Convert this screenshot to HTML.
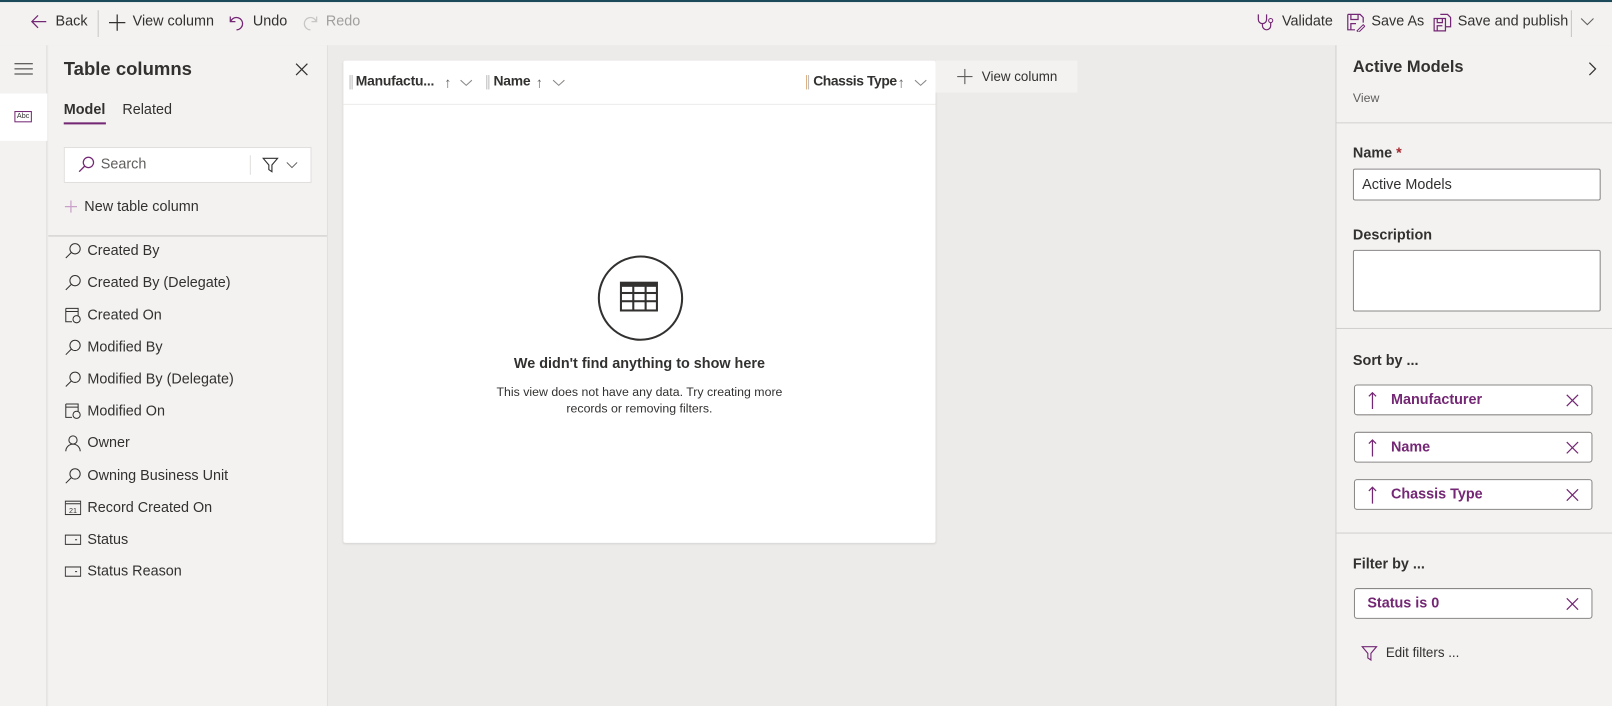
<!DOCTYPE html>
<html><head><style>
*{box-sizing:border-box;margin:0;padding:0}
html,body{width:1612px;height:706px;overflow:hidden;background:#edebe9}
#w{width:1568px;height:687px;position:relative;transform:scale(1.02806);transform-origin:0 0;font-family:"Segoe UI","Liberation Sans",sans-serif;font-size:14px;color:#323130}
.a{position:absolute}
.top{left:0;top:0;width:1568px;height:44px;background:#f3f2f1;border-top:2px solid #1c4a5a}
.tb{position:absolute;top:12px;font-size:14px;color:#323130;white-space:nowrap}
svg{display:block}
.li{position:absolute;left:63px;font-size:14px;color:#323130}
.li svg{position:absolute;left:0;top:1px}
.li span{position:absolute;left:22px;top:0;white-space:nowrap}
.chip{position:absolute;left:1317px;width:232px;height:30px;background:#fff;border:1px solid #8a8886;border-radius:3px;color:#742774;font-weight:600;font-size:14px}
.chip .t{position:absolute;left:35px;top:5px}
.chip .x{position:absolute;right:12px;top:8px}
.chip .u{position:absolute;left:13px;top:6px}
</style></head><body><div id="w">
<div class="a top"></div>
<div class="tb" style="left:30px;top:14px"><svg width="16" height="14" viewBox="0 0 16 14"><path d="M15 7H1M7 1L1 7l6 6" stroke="#742774" fill="none" stroke-width="1.2"/></svg></div>
<div class="tb" style="left:54px">Back</div>
<div class="a" style="left:95px;top:10px;width:1px;height:26px;background:#c8c6c4"></div>
<div class="tb" style="left:106px;top:14px"><svg width="16" height="16"><path d="M8 0v16M0 8h16" stroke="#323130" stroke-width="1.2"/></svg></div>
<div class="tb" style="left:129px">View column</div>
<div class="tb" style="left:222px;top:14px"><svg width="16" height="16"><path d="M2 2v5h5M2.5 6.5A6 6 0 1 1 8 15" stroke="#742774" fill="none" stroke-width="1.2"/></svg></div>
<div class="tb" style="left:246px">Undo</div>
<div class="tb" style="left:294px;top:14px"><svg width="16" height="16"><path d="M14 2v5H9M13.5 6.5A6 6 0 1 0 8 15" stroke="#c8c6c4" fill="none" stroke-width="1.2"/></svg></div>
<div class="tb" style="left:317px;color:#a19f9d">Redo</div>
<div class="tb" style="left:1222px;top:13px"><svg width="18" height="18"><path d="M2 1v5a4 4 0 0 0 8 0V1M6 10v2a4 4 0 0 0 8 0V9" stroke="#742774" fill="none" stroke-width="1.2"/><circle cx="14" cy="7" r="2" stroke="#742774" fill="none"/></svg></div>
<div class="tb" style="left:1247px">Validate</div>
<div class="tb" style="left:1310px;top:13px"><svg width="18" height="18"><path d="M1 1h12l3 3v5M1 1v15h7M4 1v5h7V1M4 16v-6h5" stroke="#742774" fill="none" stroke-width="1.2"/><path d="M10 17l6-6 1.5 1.5-6 6z" stroke="#742774" fill="none"/></svg></div>
<div class="tb" style="left:1334px">Save As</div>
<div class="tb" style="left:1394px;top:13px"><svg width="18" height="18"><path d="M1 5h11v12H1zM4 5v4h5V5M4 17v-5h5M7 1h7l3 3v9h-5" stroke="#742774" fill="none" stroke-width="1.2"/></svg></div>
<div class="tb" style="left:1418px">Save and publish</div>
<div class="a" style="left:1528px;top:10px;width:1px;height:26px;background:#c8c6c4"></div>
<div class="tb" style="left:1537px;top:17px"><svg width="14" height="8"><path d="M1 1l6 6 6-6" stroke="#605e5c" fill="none"/></svg></div>
<div class="a" style="left:0;top:44px;width:46px;height:662px;background:#f3f2f1;border-right:1px solid #e1dfdd"></div>
<div class="a" style="left:14px;top:61px"><svg width="18" height="12"><path d="M0 1h18M0 6h18M0 11h18" stroke="#323130"/></svg></div>
<div class="a" style="left:0;top:91px;width:46px;height:46px;background:#fff"></div>
<div class="a" style="left:14px;top:108px;width:17px;height:11px;border:1px solid #742774;font-size:7px;line-height:9px;text-align:center;color:#323130">Abc</div>
<div class="a" style="left:47px;top:44px;width:272px;height:662px;background:#f3f2f1;border-right:1px solid #e1dfdd"></div>
<div class="a" style="left:62px;top:57px;font-size:18px;font-weight:600">Table columns</div>
<div class="a" style="left:287px;top:61px"><svg width="13" height="13"><path d="M1 1l11 11M12 1L1 12" stroke="#323130" stroke-width="1.2"/></svg></div>
<div class="a" style="left:62px;top:98px;font-weight:600">Model</div>
<div class="a" style="left:62px;top:119px;width:41px;height:2px;background:#742774"></div>
<div class="a" style="left:119px;top:98px">Related</div>
<div class="a" style="left:62px;top:143px;width:241px;height:35px;background:#fff;border:1px solid #e1dfdd"></div>
<div class="a" style="left:76px;top:152px"><svg width="16" height="16"><circle cx="10" cy="6" r="5" stroke="#742774" fill="none" stroke-width="1.2"/><path d="M6.5 9.5L1 15" stroke="#742774" stroke-width="1.3"/></svg></div>
<div class="a" style="left:98px;top:151px;color:#605e5c">Search</div>
<div class="a" style="left:243px;top:151px;width:1px;height:19px;background:#e1dfdd"></div>
<div class="a" style="left:255px;top:153px"><svg width="16" height="15"><path d="M1 1h14l-5.5 6.5V14l-3-2V7.5z" stroke="#323130" fill="none" stroke-width="1.1"/></svg></div>
<div class="a" style="left:278px;top:157px"><svg width="12" height="7"><path d="M1 1l5 5 5-5" stroke="#605e5c" fill="none"/></svg></div>
<div class="a" style="left:63px;top:195px"><svg width="12" height="12"><path d="M6 0v12M0 6h12" stroke="#c8a0c8" stroke-width="1.2"/></svg></div>
<div class="a" style="left:82px;top:192px">New table column</div>
<div class="a" style="left:47px;top:229px;width:271px;height:1px;background:#c8c6c4"></div>
<div class="li" style="top:235px"><svg width="16" height="16"><circle cx="10" cy="6" r="5" stroke="#323130" fill="none"/><path d="M6.5 9.5L1 15" stroke="#323130"/></svg><span>Created By</span></div>
<div class="li" style="top:266px"><svg width="16" height="16"><circle cx="10" cy="6" r="5" stroke="#323130" fill="none"/><path d="M6.5 9.5L1 15" stroke="#323130"/></svg><span>Created By (Delegate)</span></div>
<div class="li" style="top:298px"><svg width="16" height="16"><path d="M1 1h12v7M1 1v13h6M1 4h12" stroke="#323130" fill="none"/><circle cx="11.5" cy="11.5" r="3.5" stroke="#323130" fill="none"/></svg><span>Created On</span></div>
<div class="li" style="top:329px"><svg width="16" height="16"><circle cx="10" cy="6" r="5" stroke="#323130" fill="none"/><path d="M6.5 9.5L1 15" stroke="#323130"/></svg><span>Modified By</span></div>
<div class="li" style="top:360px"><svg width="16" height="16"><circle cx="10" cy="6" r="5" stroke="#323130" fill="none"/><path d="M6.5 9.5L1 15" stroke="#323130"/></svg><span>Modified By (Delegate)</span></div>
<div class="li" style="top:391px"><svg width="16" height="16"><path d="M1 1h12v7M1 1v13h6M1 4h12" stroke="#323130" fill="none"/><circle cx="11.5" cy="11.5" r="3.5" stroke="#323130" fill="none"/></svg><span>Modified On</span></div>
<div class="li" style="top:422px"><svg width="16" height="16"><circle cx="8" cy="5" r="4" stroke="#323130" fill="none"/><path d="M1 16a7 7 0 0 1 14 0" stroke="#323130" fill="none"/></svg><span>Owner</span></div>
<div class="li" style="top:454px"><svg width="16" height="16"><circle cx="10" cy="6" r="5" stroke="#323130" fill="none"/><path d="M6.5 9.5L1 15" stroke="#323130"/></svg><span>Owning Business Unit</span></div>
<div class="li" style="top:485px"><svg width="16" height="16"><rect x="0.5" y="1.5" width="15" height="13" stroke="#323130" fill="none"/><path d="M1 4h14" stroke="#323130"/><text x="8" y="13" font-size="7" text-anchor="middle" fill="#323130" font-family="Liberation Sans">21</text></svg><span>Record Created On</span></div>
<div class="li" style="top:516px"><svg width="16" height="16"><rect x="0.5" y="3.5" width="15" height="9" stroke="#323130" fill="none"/><path d="M10 8h2" stroke="#323130"/></svg><span>Status</span></div>
<div class="li" style="top:547px"><svg width="16" height="16"><rect x="0.5" y="3.5" width="15" height="9" stroke="#323130" fill="none"/><path d="M10 8h2" stroke="#323130"/></svg><span>Status Reason</span></div>
<div class="a" style="left:334px;top:59px;width:576px;height:469px;background:#fff;border-radius:2px;box-shadow:0 1px 2px rgba(0,0,0,.1)"></div>
<div class="a" style="left:334px;top:101px;width:576px;height:1px;background:#edebe9"></div>
<div class="a" style="left:340px;top:73px;width:3px;height:14px;border-left:1px solid #bbb;border-right:1px solid #bbb"></div>
<div class="a" style="left:346px;top:71px;font-weight:600;font-size:13.5px;letter-spacing:-0.2px">Manufactu...</div>
<div class="a" style="left:432px;top:72px;color:#605e5c">↑</div>
<div class="a" style="left:447px;top:77px"><svg width="13" height="7"><path d="M1 1l5.5 5 5.5-5" stroke="#8a8886" fill="none"/></svg></div>
<div class="a" style="left:473px;top:73px;width:3px;height:14px;border-left:1px solid #bbb;border-right:1px solid #bbb"></div>
<div class="a" style="left:480px;top:71px;font-weight:600;font-size:13.5px;letter-spacing:-0.2px">Name</div>
<div class="a" style="left:521px;top:72px;color:#605e5c">↑</div>
<div class="a" style="left:537px;top:77px"><svg width="13" height="7"><path d="M1 1l5.5 5 5.5-5" stroke="#8a8886" fill="none"/></svg></div>
<div class="a" style="left:784px;top:73px;width:3px;height:14px;border-left:1px solid #e0b080;border-right:1px solid #bbb"></div>
<div class="a" style="left:791px;top:71px;font-weight:600;font-size:13.5px;letter-spacing:-0.4px">Chassis Type</div>
<div class="a" style="left:873px;top:72px;color:#605e5c">↑</div>
<div class="a" style="left:889px;top:77px"><svg width="13" height="7"><path d="M1 1l5.5 5 5.5-5" stroke="#8a8886" fill="none"/></svg></div>
<div class="a" style="left:910px;top:59px;width:138px;height:31px;background:#f3f2f1"></div>
<div class="a" style="left:931px;top:67px"><svg width="15" height="15"><path d="M7.5 0v15M0 7.5h15" stroke="#605e5c" stroke-width="1.1"/></svg></div>
<div class="a" style="left:955px;top:67px;font-size:13px;color:#323130">View column</div>
<div class="a" style="left:581px;top:248px"><svg width="84" height="84"><circle cx="42" cy="42" r="40.5" stroke="#323130" stroke-width="2" fill="none"/><rect x="22" y="26" width="37" height="29" fill="#323130"/><g fill="#fff"><rect x="24" y="31" width="10" height="5"/><rect x="36" y="31" width="10" height="5"/><rect x="48" y="31" width="9" height="5"/><rect x="24" y="38" width="10" height="6"/><rect x="36" y="38" width="10" height="6"/><rect x="48" y="38" width="9" height="6"/><rect x="24" y="46" width="10" height="7"/><rect x="36" y="46" width="10" height="7"/><rect x="48" y="46" width="9" height="7"/></g></svg></div>
<div class="a" style="left:334px;top:345px;width:576px;text-align:center;font-weight:700;font-size:14px">We didn't find anything to show here</div>
<div class="a" style="left:474px;top:373px;width:296px;text-align:center;font-size:12px;line-height:16px">This view does not have any data. Try creating more records or removing filters.</div>
<div class="a" style="left:1299px;top:44px;width:270px;height:662px;background:#f3f2f1;border-left:1px solid #d2d0ce"></div>
<div class="a" style="left:1569px;top:44px;width:43px;height:662px;background:#f3f2f1"></div>
<div class="a" style="left:1316px;top:57px;font-size:16px;font-weight:600">Active Models</div>
<div class="a" style="left:1545px;top:60px"><svg width="8" height="14"><path d="M1 1l6 6-6 6" stroke="#323130" fill="none" stroke-width="1.2"/></svg></div>
<div class="a" style="left:1316px;top:88px;font-size:12px;color:#605e5c">View</div>
<div class="a" style="left:1300px;top:119px;width:269px;height:1px;background:#d2d0ce"></div>
<div class="a" style="left:1316px;top:140px;font-weight:600">Name <span style="color:#a4262c">*</span></div>
<div class="a" style="left:1316px;top:164px;width:241px;height:31px;background:#fff;border:1px solid #8a8886;border-radius:2px;padding:6px 8px">Active Models</div>
<div class="a" style="left:1316px;top:220px;font-weight:600">Description</div>
<div class="a" style="left:1316px;top:243px;width:241px;height:60px;background:#fff;border:1px solid #8a8886;border-radius:2px"></div>
<div class="a" style="left:1300px;top:319px;width:269px;height:1px;background:#d2d0ce"></div>
<div class="a" style="left:1316px;top:342px;font-weight:600">Sort by ...</div>
<div class="chip" style="top:374px"><svg class="u" width="8" height="17"><path d="M4 1v16M0.5 4.5L4 1l3.5 3.5" stroke="#742774" fill="none" stroke-width="1.2"/></svg><span class="t">Manufacturer</span><svg class="x" width="13" height="13"><path d="M1 1l11 11M12 1L1 12" stroke="#742774" stroke-width="1.2"/></svg></div>
<div class="chip" style="top:420px"><svg class="u" width="8" height="17"><path d="M4 1v16M0.5 4.5L4 1l3.5 3.5" stroke="#742774" fill="none" stroke-width="1.2"/></svg><span class="t">Name</span><svg class="x" width="13" height="13"><path d="M1 1l11 11M12 1L1 12" stroke="#742774" stroke-width="1.2"/></svg></div>
<div class="chip" style="top:466px"><svg class="u" width="8" height="17"><path d="M4 1v16M0.5 4.5L4 1l3.5 3.5" stroke="#742774" fill="none" stroke-width="1.2"/></svg><span class="t">Chassis Type</span><svg class="x" width="13" height="13"><path d="M1 1l11 11M12 1L1 12" stroke="#742774" stroke-width="1.2"/></svg></div>
<div class="a" style="left:1300px;top:518px;width:269px;height:1px;background:#d2d0ce"></div>
<div class="a" style="left:1316px;top:540px;font-weight:600">Filter by ...</div>
<div class="chip" style="top:572px"><span class="t" style="left:12px">Status is 0</span><svg class="x" width="13" height="13"><path d="M1 1l11 11M12 1L1 12" stroke="#742774" stroke-width="1.2"/></svg></div>
<div class="a" style="left:1324px;top:628px"><svg width="16" height="15"><path d="M1 1h14l-5.5 6.5V14l-3-2V7.5z" stroke="#742774" fill="none" stroke-width="1.1"/></svg></div>
<div class="a" style="left:1348px;top:627px;font-size:13px">Edit filters ...</div>
</div></body></html>
